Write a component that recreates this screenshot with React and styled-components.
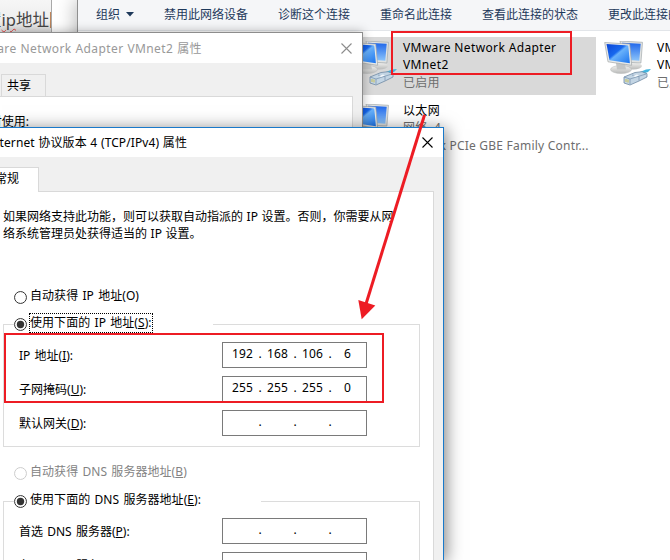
import React from 'react';
import styled, { createGlobalStyle } from 'styled-components';

const toolbarItems = [
  '禁用此网络设备',
  '诊断这个连接',
  '重命名此连接',
  '查看此连接的状态',
  '更改此连接的设置',
];

const connections = [
  {
    id: 1,
    name: ['VMware Network Adapter', 'VMnet2'],
    info: ['已启用'],
    selected: true,
  },
  {
    id: 2,
    name: ['VMware Network Adapter', 'VMnet8'],
    info: ['已启用'],
  },
  {
    id: 3,
    name: ['以太网'],
    info: ['网络  4', 'Realtek PCIe GBE Family Contr...'],
  },
];

const CloseIcon = ({ color }) => (
  <svg width="11" height="11" viewBox="0 0 11 11">
    <path d="M.5.5l10 10M10.5.5l-10 10" stroke={color} strokeWidth="1.1" />
  </svg>
);

const ConnectionIcon = () => (
  <svg width="50" height="50" viewBox="0 0 50 50">
    <defs>
      <linearGradient id="screen" x1="0" y1="0" x2="1" y2="1">
        <stop offset="0" stopColor="#0c45d6" />
        <stop offset="0.42" stopColor="#1768ee" />
        <stop offset="0.5" stopColor="#69b2fb" />
        <stop offset="1" stopColor="#1c74ee" />
      </linearGradient>
      <linearGradient id="backScreen" x1="0" y1="0" x2="0" y2="1">
        <stop offset="0" stopColor="#1f66ea" />
        <stop offset="1" stopColor="#8cc4fb" />
      </linearGradient>
      <linearGradient id="stand" x1="0" y1="0" x2="0" y2="1">
        <stop offset="0" stopColor="#f2f2f0" />
        <stop offset="1" stopColor="#b9bab9" />
      </linearGradient>
    </defs>
    <ellipse cx="29" cy="25" rx="9" ry="3.5" fill="url(#stand)" />
    <path d="M16 0l22.5 1.3-1.6 20.7-17-1z" fill="#e1e3e2" stroke="#a4aaad" strokeWidth=".7" />
    <path d="M18 1.7l18.7 1-1.4 17-14-1z" fill="url(#backScreen)" />
    <ellipse cx="17" cy="28.5" rx="10.5" ry="4" fill="url(#stand)" stroke="#b5b6b6" strokeWidth=".5" />
    <path d="M12 22l9 1 1 5.5h-9z" fill="#c3c5c5" />
    <path d="M.7 1.5l25 1.6 2 21.2L4 20.8z" fill="#e9ebea" stroke="#a2a6a8" strokeWidth=".7" />
    <path d="M2.5 3l21.8 1.6 1.6 17.7L5.5 19.3z" fill="url(#screen)" />
    <path d="M36 31l6-2.5 5-.5-3 3-6 2z" fill="#42b5df" />
    <path d="M20 36l11-4.5 7-.8 5 2v3.3l-8 4-9 4-6-2z" fill="#c3d5e4" stroke="#6f89a3" strokeWidth=".8" />
    <path d="M20 36l6 2v5M26 38l16-5M28 34l7 1.5v4" fill="none" stroke="#7d98b2" strokeWidth=".8" />
    <path d="M22 38v3M24 38.5v3" stroke="#cbc155" strokeWidth="1" />
    <path d="M29 35l4-1.5 2 1-4 1.5z" fill="#f4f8fb" />
  </svg>
);

const Radio = ({ checked, disabled }) => (
  <RadioMark width="13" height="13" viewBox="0 0 13 13">
    <circle cx="6.5" cy="6.5" r="5.95" fill="#fff" stroke={disabled ? '#ccc' : '#333'} />
    {checked && <circle cx="6.5" cy="6.5" r="3.7" fill="#333" />}
  </RadioMark>
);

const IpField = ({ value = ['', '', '', ''] }) => (
  <Field>
    {value.map((part, i) => (
      <React.Fragment key={i}>
        {i > 0 && <Dot>.</Dot>}
        <Octet>{part}</Octet>
      </React.Fragment>
    ))}
  </Field>
);

const Key = ({ label, letter }) => (
  <>
    {label}(<u>{letter}</u>)
  </>
);

const App = () => (
  <Desktop>
    <GlobalStyle />
    <Document>
      <DocText>
        设置<Misspelled>ip</Misspelled>地址
      </DocText>
      <span>同</span>
    </Document>

    <Explorer>
      <Toolbar>
        <Organize>
          组织
          <svg width="8" height="5" viewBox="0 0 8 5">
            <path d="M0 0h8L4 4.6z" fill="#1e395b" />
          </svg>
        </Organize>
        {toolbarItems.map(item => (
          <span key={item}>{item}</span>
        ))}
      </Toolbar>
      <Connections>
        {connections.map(({ id, name, info, selected }) => (
          <Connection key={id} $selected={selected}>
            <ConnectionIcon />
            <div>
              {name.map(line => (
                <Line key={line}>{line}</Line>
              ))}
              {info.map(line => (
                <Line key={line} $muted>
                  {line}
                </Line>
              ))}
            </div>
          </Connection>
        ))}
      </Connections>
    </Explorer>

    <AdapterWindow>
      <TitleBar $height={30}>
        <Title $width={202} $muted $spacing={0.4}>
          VMware Network Adapter VMnet2 属性
        </Title>
        <CloseIcon color="#8c8c8c" />
      </TitleBar>
      <AdapterTabs>
        <AdapterTab>共享</AdapterTab>
      </AdapterTabs>
      <AdapterPage>
        <UseLabel>连接时使用:</UseLabel>
      </AdapterPage>
    </AdapterWindow>

    <ProtocolWindow>
      <TitleBar $height={29}>
        <Title $width={187} $spacing={0.1}>
          Internet 协议版本 4 (TCP/IPv4) 属性
        </Title>
        <CloseIcon color="#000" />
      </TitleBar>
      <ProtocolTabs>
        <ProtocolTab>常规</ProtocolTab>
      </ProtocolTabs>
      <ProtocolPage>
        <Description>
          <div>如果网络支持此功能，则可以获取自动指派的 IP 设置。否则，你需要从网</div>
          <div>络系统管理员处获得适当的 IP 设置。</div>
        </Description>
        <Choice>
          <Radio />
          <ChoiceLabel>自动获得 IP 地址(O)</ChoiceLabel>
        </Choice>
        <Group $height={123}>
          <Legend $width={199} $gap={10}>
            <Radio checked />
            <ChoiceLabel $focused>
              <Key label="使用下面的 IP 地址" letter="S" />:
            </ChoiceLabel>
          </Legend>
          <Row>
            <span>
              <Key label="IP 地址" letter="I" />:
            </span>
            <IpField value={['192', '168', '106', '6']} />
          </Row>
          <Row>
            <span>
              <Key label="子网掩码" letter="U" />:
            </span>
            <IpField value={['255', '255', '255', '0']} />
          </Row>
          <Row>
            <span>
              <Key label="默认网关" letter="D" />:
            </span>
            <IpField />
          </Row>
        </Group>
        <Choice $dns>
          <Radio disabled />
          <ChoiceLabel $disabled>
            <Key label="自动获得 DNS 服务器地址" letter="B" />
          </ChoiceLabel>
        </Choice>
        <Group $height={90}>
          <Legend $width={247} $gap={9}>
            <Radio checked />
            <ChoiceLabel>
              <Key label="使用下面的 DNS 服务器地址" letter="E" />:
            </ChoiceLabel>
          </Legend>
          <Row>
            <span>
              <Key label="首选 DNS 服务器" letter="P" />:
            </span>
            <IpField />
          </Row>
          <Row>
            <span>
              <Key label="备用 DNS 服务器" letter="A" />:
            </span>
            <IpField />
          </Row>
        </Group>
      </ProtocolPage>
    </ProtocolWindow>

    <Annotations width="670" height="560" viewBox="0 0 670 560">
      <g fill="none" stroke="#ed1c24" strokeWidth="2">
        <rect x="392" y="32" width="179" height="42" />
        <rect x="5" y="334" width="378" height="68" />
      </g>
      <path d="M424.5 115L366 304" stroke="#ed1c24" strokeWidth="3" />
      <path d="M358.3 300l17 5.5-13.6 13.7z" fill="#ed1c24" />
    </Annotations>
  </Desktop>
);

export default App;

const GlobalStyle = createGlobalStyle`
  * {
    box-sizing: border-box;
  }
  body {
    margin: 0;
    overflow: hidden;
    font: 12px/17px 'Noto Sans', 'Noto Sans CJK SC', sans-serif;
    color: #000;
  }
  u {
    text-underline-offset: 1px;
  }
`;

const Desktop = styled.div`
  position: relative;
  display: flex;
  width: 670px;
  height: 560px;
  overflow: hidden;
  background: #fff;
  white-space: pre;
`;

const Document = styled.div`
  display: flex;
  width: 52px;
  height: 127px;
  padding-top: 9px;
  overflow: hidden;
  flex-shrink: 0;
  border-right: 1px solid #a9a9a9;
  background: linear-gradient(#f6f6f6 0, #eee 20px, #ddd 32px);
  color: #444;
  font-size: 16.5px;
  line-height: 22px;
`;

const DocText = styled.div`
  display: flex;
  justify-content: flex-end;
  width: 49px;
  flex-shrink: 0;
`;

const Misspelled = styled.span`
  text-decoration: underline wavy #e04040 1px;
  text-underline-offset: 2px;
`;

const Explorer = styled.div`
  flex: 1;
  height: 560px;
  margin-left: 25px;
  border-left: 1px solid #8f8f8f;
  box-shadow: -2px 0 18px rgba(0, 0, 0, 0.28);
  background: #fff;
  overflow: hidden;
`;

const Toolbar = styled.div`
  display: flex;
  align-items: center;
  gap: 30px;
  height: 31px;
  padding: 0 0 1px 18px;
  border-bottom: 1px solid #e2e5e9;
  background: #f5f6f8;
  color: #1e395b;

  span {
    flex-shrink: 0;
  }
`;

const Organize = styled.div`
  display: flex;
  align-items: center;
  gap: 6px;
  flex-shrink: 0;
`;

const Connections = styled.div`
  display: grid;
  grid-template-columns: 251px 251px;
  grid-auto-rows: 58px;
  gap: 5px 3px;
  margin: 6px 0 0 267px;
`;

const Connection = styled.div`
  display: flex;
  gap: 3px;
  padding: 2px 0 0 5px;
  background: ${({ $selected }) => ($selected ? '#d9d9d9' : 'transparent')};

  svg {
    flex-shrink: 0;
    margin-top: 2px;
  }
`;

const Line = styled.div`
  height: 17.3px;
  letter-spacing: ${({ $muted }) => ($muted ? 0.22 : 0.36)}px;
  color: ${({ $muted }) => ($muted ? '#6d6d6d' : '#000')};
`;

const DialogWindow = styled.div`
  position: absolute;
  left: 0;
  background: #f0f0f0;
`;

const AdapterWindow = styled(DialogWindow)`
  top: 32px;
  width: 363px;
  height: 110px;
  border-top: 1px solid #8d8d8d;
  border-right: 1px solid #8d8d8d;
  box-shadow: 0 0 10px rgba(0, 0, 0, 0.3);
`;

const ProtocolWindow = styled(DialogWindow)`
  top: 127px;
  width: 444px;
  height: 433px;
  border-top: 1px solid #1979ca;
  border-right: 1px solid #1979ca;
  box-shadow: 2px 2px 16px rgba(0, 0, 0, 0.5);
`;

const TitleBar = styled.div`
  display: flex;
  align-items: center;
  justify-content: space-between;
  height: ${({ $height }) => $height}px;
  padding-right: 10px;
  background: #fff;
`;

const Title = styled.div`
  display: flex;
  justify-content: flex-end;
  width: ${({ $width }) => $width}px;
  overflow: hidden;
  letter-spacing: ${({ $spacing }) => $spacing}px;
  word-spacing: 0.4px;
  color: ${({ $muted }) => ($muted ? '#999' : '#000')};
`;

const AdapterTabs = styled.div`
  display: flex;
  align-items: flex-end;
  height: 33px;
  padding-left: 1px;
`;

const AdapterTab = styled.div`
  width: 45px;
  height: 22px;
  padding: 2px 0 0 5px;
  border: 1px solid #d9d9d9;
  border-bottom: 0;
`;

const AdapterPage = styled.div`
  width: 353px;
  height: 46px;
  padding-top: 16px;
  border: solid #d9d9d9;
  border-width: 1px 1px 0 0;
  background: #fff;
`;

const UseLabel = styled.div`
  display: flex;
  justify-content: flex-end;
  width: 29px;
`;

const ProtocolTabs = styled.div`
  display: flex;
  align-items: flex-end;
  height: 34px;
`;

const ProtocolTab = styled.div`
  display: flex;
  justify-content: flex-end;
  width: 39px;
  height: 25px;
  margin-bottom: -1px;
  padding: 2px 19px 0 0;
  border: solid #d9d9d9;
  border-width: 1px 1px 0 0;
  background: #fff;
  z-index: 1;
`;

const ProtocolPage = styled.div`
  width: 434px;
  height: 370px;
  padding-left: 3px;
  overflow: hidden;
  border: solid #d9d9d9;
  border-width: 1px 1px 0 0;
  background: #fff;
  word-spacing: 1.1px;
`;

const Description = styled.div`
  height: 98px;
  padding-top: 16px;
  word-spacing: 0.5px;
`;

const Choice = styled.div`
  display: flex;
  gap: 3px;
  height: 17px;
  padding-left: 11px;
  margin: ${({ $dns }) => ($dns ? '16px 0 21px' : '-3px 0 20px')};
`;

const RadioMark = styled.svg`
  flex-shrink: 0;
  margin-top: 4px;
`;

const ChoiceLabel = styled.div`
  height: 18px;
  letter-spacing: 0.05px;
  outline: ${({ $focused }) => ($focused ? '1px dotted #000' : 'none')};
  color: ${({ $disabled }) => ($disabled ? '#838383' : '#000')};
`;

const Group = styled.fieldset`
  width: 417px;
  height: ${({ $height }) => $height}px;
  margin: 0;
  padding: 0;
  border: 1px solid #dcdcdc;
`;

const Legend = styled.div`
  display: flex;
  gap: 3px;
  width: ${({ $width }) => $width}px;
  height: 18px;
  margin: -11px 0 ${({ $gap }) => $gap}px 10px;
  background: #fff;
`;

const Row = styled.div`
  display: flex;
  align-items: center;
  justify-content: space-between;
  width: 363px;
  height: 26px;
  margin-bottom: 8px;
  padding-left: 15px;
`;

const Field = styled.div`
  display: flex;
  width: 145px;
  height: 26px;
  padding: 2px 0 0 4px;
  border: 1px solid #7a7a7a;
  background: #fff;
`;

const Octet = styled.span`
  width: 31px;
  text-align: center;
  letter-spacing: 0.15px;
`;

const Dot = styled.span`
  width: 4px;
  text-align: center;
`;

const Annotations = styled.svg`
  position: absolute;
  top: 0;
  left: 0;
`;
